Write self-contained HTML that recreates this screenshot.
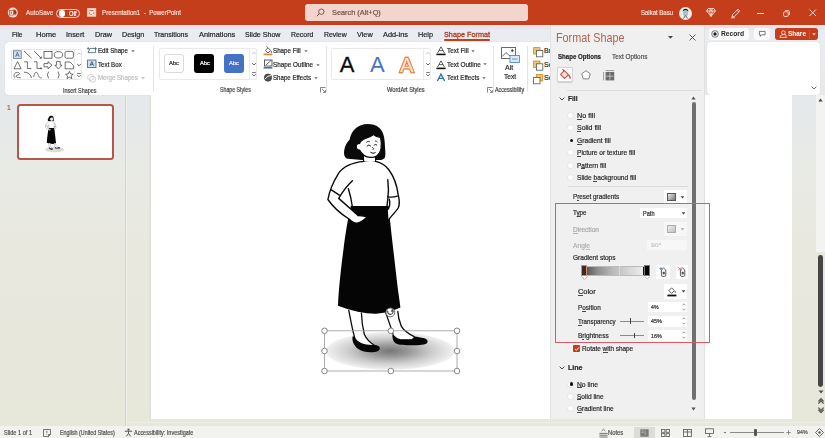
<!DOCTYPE html>
<html><head><meta charset="utf-8">
<style>
*{margin:0;padding:0;box-sizing:border-box}
html,body{width:825px;height:438px;overflow:hidden;font-family:"Liberation Sans", sans-serif;background:#E7E8E2;position:relative}
.a{position:absolute}
.t{position:absolute;white-space:pre;-webkit-text-stroke:0.2px currentColor}
svg{position:absolute;overflow:visible}
</style></head><body>
<div class="a" style="left:0;top:25px;width:825px;height:413px;background:linear-gradient(180deg,#E9ECF1 0px,#E5E9EC 75px,#E8EAE4 150px,#E8E8DE 235px,#E7E7DA 413px)"></div>
<div class="a" style="left:0;top:0;width:825px;height:25px;background:#C43E1C"></div>
<div class="a" style="left:0;top:25px;width:825px;height:5px;background:linear-gradient(180deg,#F2ECEE 0%,#EADFEA 45%,#E9ECF1 100%)"></div>
<div class="a" style="left:5px;top:42px;width:560px;height:53px;background:#FFFFFF;border-radius:4px;box-shadow:0 0 1px rgba(0,0,0,0.18)"></div>
<div class="a" style="left:707px;top:42px;width:113px;height:52.5px;background:#FFFFFF;border-radius:4px;box-shadow:0 0 1px rgba(0,0,0,0.15)"></div>
<div class="a" style="left:124.7px;top:95px;width:1px;height:331px;background:#D3D5CC"></div><div class="a" style="left:125.8px;top:95px;width:1px;height:331px;background:#F0F0EA"></div>
<div class="a" style="left:149.4px;top:95px;width:1.4px;height:324.8px;background:#E0E1DA"></div><div class="a" style="left:150.8px;top:95px;width:399.2px;height:323.8px;background:#FFFFFF"></div>
<div class="a" style="left:703px;top:95px;width:89px;height:323.8px;background:#FFFFFF"></div>
<div class="a" style="left:126px;top:421.6px;width:699px;height:1.8px;background:#EEEFE8"></div><div class="a" style="left:0;top:426.2px;width:825px;height:11.8px;background:#F2F2EE"></div>
<svg style="left:6.5px;top:7px" width="12" height="12" viewBox="0 0 12 12"><circle cx="5.8" cy="5.6" r="5" fill="#F7D9CF"/><path d="M6.4 2.2 A3.6 3.6 0 0 1 9.2 7.4 L6.4 7.4 Z" fill="#A8361A"/><rect x="2.6" y="3.4" width="4" height="4.6" fill="#FFF4F0" stroke="#B5482C" stroke-width="0.7"/><rect x="3.6" y="4.4" width="1.6" height="2.4" fill="#C9715A"/></svg>
<div class="t" style="left:26.00px;top:9.29px;font-size:7.6px;line-height:7.6px;color:#F8DDD4;font-weight:400;letter-spacing:0.000px;transform:scaleX(0.8288);transform-origin:0 0;">AutoSave</div>
<div class="a" style="left:56.1px;top:8.9px;width:23.6px;height:8.8px;border:1.2px solid #F6D3C8;border-radius:4.4px"></div>
<div class="a" style="left:58.9px;top:9.95px;width:6.6px;height:6.6px;background:#FFFFFF;border-radius:50%"></div>
<div class="t" style="left:68.50px;top:11.12px;font-size:6.4px;line-height:6.4px;color:#FFFFFF;font-weight:400;letter-spacing:0.000px;transform:scaleX(0.8905);transform-origin:0 0;">Off</div>
<svg style="left:86.7px;top:7.9px" width="9.2" height="8.8" viewBox="0 0 9.2 8.8"><rect x="0" y="0" width="9.2" height="8.8" rx="0.6" fill="#F2C8BC"/><rect x="1.4" y="1.2" width="6.4" height="6.4" fill="#F8E0D8"/><path d="M2.6 2.6 H6.6 M2.4 4.4 V6.2 M6.8 4.4 V6.2 M3.4 6.6 H5" stroke="#B9553D" stroke-width="0.8"/></svg>
<div class="t" style="left:101.50px;top:9.49px;font-size:7.6px;line-height:7.6px;color:#F8E0D8;font-weight:400;letter-spacing:0.000px;transform:scaleX(0.8162);transform-origin:0 0;">Presentation1  -  PowerPoint</div>
<div class="a" style="left:305px;top:4px;width:223px;height:17px;background:#F3D5CE;border-radius:3px"></div>
<svg style="left:316px;top:8px" width="9" height="9" viewBox="0 0 9 9"><circle cx="5.3" cy="3.7" r="2.7" fill="none" stroke="#6b4a42" stroke-width="0.9"/><line x1="3.4" y1="5.6" x2="0.8" y2="8.2" stroke="#6b4a42" stroke-width="1"/></svg>
<div class="t" style="left:331.50px;top:9.38px;font-size:7.4px;line-height:7.4px;color:#6E5149;font-weight:400;letter-spacing:0.000px;transform:scaleX(0.9940);transform-origin:0 0;">Search (Alt+Q)</div>
<div class="t" style="left:640.70px;top:9.48px;font-size:7.2px;line-height:7.2px;color:#F8E0D8;font-weight:400;letter-spacing:0.000px;transform:scaleX(0.8342);transform-origin:0 0;">Saikat Basu</div>
<svg style="left:678.5px;top:6.6px" width="13" height="13" viewBox="0 0 13 13"><circle cx="6.5" cy="6.5" r="6.5" fill="#F4EEEC"/><path d="M3.6 4.6 Q4 1.8 6.6 1.8 Q9.2 1.8 9.4 4.6 Q8 3.4 6.5 3.6 Q5 3.4 3.6 4.6Z" fill="#1d1d1d"/><ellipse cx="6.5" cy="6.2" rx="2.6" ry="2.9" fill="#A9C3C6"/><path d="M4.2 11.6 L6.5 8.6 L8.8 11.6" fill="none" stroke="#3a3a3a" stroke-width="0.8"/></svg>
<svg style="left:705.5px;top:8px" width="10" height="9" viewBox="0 0 10 9"><path d="M2 0.6 H8 L9.4 3 L5 8.4 L0.6 3 Z M0.6 3 H9.4 M3.5 0.6 L5 3 L6.5 0.6 M3.5 3 L5 8.4 L6.5 3" fill="none" stroke="#FBE3DC" stroke-width="0.9"/></svg>
<svg style="left:730px;top:7.5px" width="11" height="11" viewBox="0 0 11 11"><path d="M2 9.2 L2.6 6.6 L8 1.2 L9.8 3 L4.4 8.4 Z M7 2.2 L8.8 4" fill="none" stroke="#FBE3DC" stroke-width="0.9"/><path d="M1 10.2 Q3 9 5 10" stroke="#FBE3DC" stroke-width="0.8" fill="none"/></svg>
<div class="a" style="left:756.5px;top:12.6px;width:7.5px;height:0.9px;background:#FBE3DC"></div>
<svg style="left:782.5px;top:9.5px" width="7" height="7" viewBox="0 0 7 7"><rect x="0.6" y="1.8" width="4.6" height="4.6" rx="1" fill="none" stroke="#FBE3DC" stroke-width="0.9"/><path d="M2 0.6 H5.2 Q6.4 0.6 6.4 1.8 V5" fill="none" stroke="#FBE3DC" stroke-width="0.9"/></svg>
<svg style="left:808.5px;top:9px" width="7.5" height="7.5" viewBox="0 0 7.5 7.5"><path d="M0.5 0.5 L7 7 M7 0.5 L0.5 7" stroke="#FBE3DC" stroke-width="0.95"/></svg>
<div class="t" style="left:11.70px;top:31.48px;font-size:7.3px;line-height:7.3px;color:#262626;font-weight:400;letter-spacing:0.000px;transform:scaleX(0.8924);transform-origin:0 0;">File</div>
<div class="t" style="left:35.90px;top:31.48px;font-size:7.3px;line-height:7.3px;color:#262626;font-weight:400;letter-spacing:0.000px;transform:scaleX(1.0427);transform-origin:0 0;">Home</div>
<div class="t" style="left:66.00px;top:31.48px;font-size:7.3px;line-height:7.3px;color:#262626;font-weight:400;letter-spacing:0.000px;transform:scaleX(1.0082);transform-origin:0 0;">Insert</div>
<div class="t" style="left:94.60px;top:31.48px;font-size:7.3px;line-height:7.3px;color:#262626;font-weight:400;letter-spacing:0.000px;transform:scaleX(0.9923);transform-origin:0 0;">Draw</div>
<div class="t" style="left:121.80px;top:31.48px;font-size:7.3px;line-height:7.3px;color:#262626;font-weight:400;letter-spacing:0.000px;transform:scaleX(0.9772);transform-origin:0 0;">Design</div>
<div class="t" style="left:154.00px;top:31.48px;font-size:7.3px;line-height:7.3px;color:#262626;font-weight:400;letter-spacing:0.000px;transform:scaleX(0.9599);transform-origin:0 0;">Transitions</div>
<div class="t" style="left:198.70px;top:31.48px;font-size:7.3px;line-height:7.3px;color:#262626;font-weight:400;letter-spacing:0.000px;transform:scaleX(1.0053);transform-origin:0 0;">Animations</div>
<div class="t" style="left:245.00px;top:31.48px;font-size:7.3px;line-height:7.3px;color:#262626;font-weight:400;letter-spacing:0.000px;transform:scaleX(0.9722);transform-origin:0 0;">Slide Show</div>
<div class="t" style="left:290.70px;top:31.48px;font-size:7.3px;line-height:7.3px;color:#262626;font-weight:400;letter-spacing:0.000px;transform:scaleX(0.9477);transform-origin:0 0;">Record</div>
<div class="t" style="left:324.00px;top:31.48px;font-size:7.3px;line-height:7.3px;color:#262626;font-weight:400;letter-spacing:0.000px;transform:scaleX(0.9483);transform-origin:0 0;">Review</div>
<div class="t" style="left:357.00px;top:31.48px;font-size:7.3px;line-height:7.3px;color:#262626;font-weight:400;letter-spacing:0.000px;transform:scaleX(1.0008);transform-origin:0 0;">View</div>
<div class="t" style="left:383.00px;top:31.48px;font-size:7.3px;line-height:7.3px;color:#262626;font-weight:400;letter-spacing:0.000px;transform:scaleX(1.0101);transform-origin:0 0;">Add-ins</div>
<div class="t" style="left:418.00px;top:31.48px;font-size:7.3px;line-height:7.3px;color:#262626;font-weight:400;letter-spacing:0.000px;transform:scaleX(0.9990);transform-origin:0 0;">Help</div>
<div class="t" style="left:444.00px;top:31.43px;font-size:7.4px;line-height:7.4px;color:#B5391C;font-weight:400;letter-spacing:0.000px;-webkit-text-stroke:0.3px currentColor;transform:scaleX(0.9820);transform-origin:0 0;">Shape Format</div>
<div class="a" style="left:444px;top:39.4px;width:46px;height:1.8px;background:#C43E1C;border-radius:1px"></div>
<div class="a" style="left:709px;top:28px;width:40px;height:12px;background:#FAFAFA;border-radius:3px"></div>
<svg style="left:711px;top:29.7px" width="8" height="8" viewBox="0 0 8 8"><circle cx="4" cy="4" r="3.3" fill="none" stroke="#444" stroke-width="0.7"/><circle cx="4" cy="4" r="1.7" fill="#222"/></svg>
<div class="t" style="left:721.00px;top:30.48px;font-size:7.4px;line-height:7.4px;color:#262626;font-weight:700;letter-spacing:0.000px;-webkit-text-stroke:0;transform:scaleX(0.9031);transform-origin:0 0;">Record</div>
<div class="a" style="left:754px;top:28px;width:16px;height:12px;background:#FAFAFA;border-radius:3px"></div>
<svg style="left:758.5px;top:30.8px" width="6.5" height="6" viewBox="0 0 6.5 6"><path d="M0.4 0.4 H6.1 V3.8 H2.6 L1.3 5.4 V3.8 H0.4 Z" fill="none" stroke="#444" stroke-width="0.7"/></svg>
<div class="a" style="left:775px;top:27.8px;width:43px;height:12.2px;background:#C43E1C;border-radius:3px"></div>
<svg style="left:778.5px;top:30px" width="8" height="8" viewBox="0 0 8 8"><circle cx="4.4" cy="2.6" r="1.8" fill="none" stroke="#FBE3DC" stroke-width="0.8"/><path d="M0.8 7.4 Q1.4 4.6 4 4.6 L6.6 4.6 L7.4 7.4 Z" fill="none" stroke="#FBE3DC" stroke-width="0.8"/></svg>
<div class="t" style="left:788.00px;top:30.48px;font-size:7.4px;line-height:7.4px;color:#FFFFFF;font-weight:700;letter-spacing:0.000px;-webkit-text-stroke:0;transform:scaleX(0.8760);transform-origin:0 0;">Share</div>
<div class="a" style="left:809px;top:29.5px;width:0.6px;height:9px;background:#C9553A"></div>
<svg style="left:811.5px;top:32.8px" width="4" height="3" viewBox="0 0 4 3"><path d="M0.2 0.2 H3.8 L2 2.4 Z" fill="#F6CFC4"/></svg>
<div class="a" style="left:11px;top:48.8px;width:71px;height:31px;border:1px solid #E8E8E8;border-radius:2px"></div>
<div class="a" style="left:74px;top:49.5px;width:0.8px;height:29.5px;background:#EAEAEA"></div>
<svg style="left:11px;top:48px" width="72" height="32" viewBox="0 0 72 32">
<g fill="none" stroke="#3f3f3f" stroke-width="0.75">
<rect x="2.6" y="2.8" width="7.6" height="7.6" fill="#CFE0F1" stroke="#5a6f86"/>
<path d="M4.6 8.8 L6.4 4.2 L8.2 8.8 M5.2 7.2 H7.6" stroke="#3a5a7a" stroke-width="0.7"/>
<line x1="13" y1="3" x2="20.5" y2="10.2"/>
<line x1="23" y1="3" x2="30" y2="10"/><path d="M28.6 10.4 L30.4 10.4 L30.4 8.6" />
<rect x="33" y="3.4" width="8" height="6.8"/>
<ellipse cx="47.4" cy="6.8" rx="4.2" ry="3.2"/>
<rect x="54" y="3.4" width="8.4" height="6.8" rx="1.5"/>
<path d="M3 20.8 L6.6 13.6 L10.2 20.8 Z"/>
<path d="M13.2 13.8 H16.4 V20.6 H20.4"/>
<path d="M23 13.8 H26 V20.4 H29.6"/><circle cx="30" cy="20.4" r="0.6" fill="#3f3f3f"/>
<path d="M33 15.6 H37 V13.6 L41 17.2 L37 20.8 V18.8 H33 Z"/>
<path d="M45.6 13.4 H49.2 V17.2 H51 L47.4 21 L43.8 17.2 H45.6 Z"/>
<path d="M54.2 14 H59 L62.4 17.4 V20.8 H54.2 Z"/>
<path d="M4 29.8 C2 28 3 24.4 6.6 24.4 C9 24.4 9 27 6.8 27 C4.6 27 4.6 29.6 7.4 29.6 L9.8 29.8"/>
<path d="M13 24.2 Q19 24 20.6 30"/>
<path d="M22.6 29 C24 23 26 23.4 27 26.4 C28 29.6 29.6 30.4 30.8 29.6"/>
<path d="M37.6 23.6 Q35.2 26.8 37.6 30.4"/>
<path d="M47 23.6 Q49.4 26.8 47 30.4"/>
<path d="M58.4 23.4 L59.6 26 L62.2 26.2 L60.2 28 L60.8 30.6 L58.4 29.2 L56 30.6 L56.6 28 L54.6 26.2 L57.2 26 Z"/>
</g>
<g fill="#555">
<path d="M66.2 6.4 L68 4.8 L69.8 6.4" stroke="#999" stroke-width="0.6" fill="none"/>
<path d="M66.2 16 L68 17.8 L69.8 16" stroke="#333" stroke-width="0.8" fill="none"/>
<path d="M66.2 25.4 H69.8 M66.2 27 L68 28.8 L69.8 27" stroke="#333" stroke-width="0.7" fill="none"/>
</g></svg>
<svg style="left:87px;top:47px" width="10" height="36" viewBox="0 0 10 36"><g fill="none" stroke="#3f5f7f" stroke-width="0.8"><path d="M1 5.6 L3 1.4 H8.6 V5.6 M1 5.6 H8.6"/><circle cx="1.2" cy="1.4" r="0.7" fill="#3f5f7f"/><circle cx="8.6" cy="1.4" r="0.7" fill="#3f5f7f"/><rect x="0.6" y="13" width="8.4" height="7.6" fill="#CFE0F1"/><path d="M3 18.8 L4.8 14.6 L6.6 18.8 M3.6 17.4 H6" stroke="#2a4a6a"/><circle cx="3.6" cy="30.4" r="3" stroke="#c8c8c8"/><circle cx="5.6" cy="32.2" r="3" stroke="#c8c8c8"/></g></svg>
<div class="t" style="left:98.20px;top:47.33px;font-size:7px;line-height:7px;color:#262626;font-weight:400;letter-spacing:0.000px;transform:scaleX(0.8701);transform-origin:0 0;">Edit Shape</div>
<svg style="left:131px;top:49.8px" width="4" height="3" viewBox="0 0 4 3"><path d="M0.3 0.3 H3.7 L2 2.2Z" fill="#666"/></svg>
<div class="t" style="left:98.20px;top:61.28px;font-size:7px;line-height:7px;color:#262626;font-weight:400;letter-spacing:0.000px;transform:scaleX(0.8861);transform-origin:0 0;">Text Box</div>
<div class="t" style="left:98.20px;top:74.48px;font-size:7px;line-height:7px;color:#BDBDBD;font-weight:400;letter-spacing:0.000px;transform:scaleX(0.8741);transform-origin:0 0;">Merge Shapes</div>
<svg style="left:141px;top:77px" width="4" height="3" viewBox="0 0 4 3"><path d="M0 0 H4 L2 2.4Z" fill="#c8c8c8"/></svg>
<div class="t" style="left:63.00px;top:87.76px;font-size:6.3px;line-height:6.3px;color:#444444;font-weight:400;letter-spacing:0.000px;transform:scaleX(0.8621);transform-origin:0 0;">Insert Shapes</div>
<div class="a" style="left:153px;top:46px;width:0.8px;height:46px;background:#E4E4E4"></div>
<div class="a" style="left:159.3px;top:48.2px;width:98px;height:32px;border:1px solid #EAEAEA;border-radius:2px"></div>
<div class="a" style="left:163.6px;top:53.7px;width:20.4px;height:19.7px;background:#fff;border:1.5px solid #D8DCD4;border-radius:3px"></div>
<div class="a" style="left:194.2px;top:53.7px;width:20px;height:19.7px;background:#000;border-radius:3px"></div>
<div class="a" style="left:224px;top:53.7px;width:20px;height:19.7px;background:#4472C4;border-radius:3px"></div>
<div class="t" style="left:169.00px;top:61.25px;font-size:5.6px;line-height:5.6px;color:#333;font-weight:400;letter-spacing:0.000px;transform:scaleX(1.0373);transform-origin:0 0;">Abc</div>
<div class="t" style="left:199.50px;top:61.25px;font-size:5.6px;line-height:5.6px;color:#fff;font-weight:400;letter-spacing:0.000px;transform:scaleX(1.0373);transform-origin:0 0;">Abc</div>
<div class="t" style="left:229.30px;top:61.25px;font-size:5.6px;line-height:5.6px;color:#f4f4f4;font-weight:400;letter-spacing:0.000px;transform:scaleX(1.0373);transform-origin:0 0;">Abc</div>
<div class="a" style="left:249.2px;top:49px;width:0.8px;height:30.5px;background:#EAEAEA"></div>
<svg style="left:250px;top:49px" width="8" height="31" viewBox="0 0 8 31"><path d="M2.2 5 L4 3.4 L5.8 5" stroke="#999" stroke-width="0.6" fill="none"/><path d="M2.2 14.2 L4 16 L5.8 14.2" stroke="#333" stroke-width="0.8" fill="none"/><path d="M2.2 23.6 H5.8 M2.2 25.2 L4 27 L5.8 25.2" stroke="#333" stroke-width="0.7" fill="none"/></svg>
<svg style="left:262.5px;top:46px" width="10" height="36" viewBox="0 0 10 36"><g fill="none" stroke="#333" stroke-width="0.8">
<path d="M2.4 4.4 L5 1.8 L7.6 4.4 L5 7 Z"/><path d="M5 1.8 L3.6 0.4"/><path d="M8 5 Q9 6.4 8.4 7"/>
<rect x="0.6" y="7.6" width="8.8" height="1.6" fill="#ED7D31" stroke="none"/>
<rect x="1.4" y="14" width="7.6" height="6" stroke="#333"/><path d="M3 19 L7.8 14.6" stroke="#333"/>
<rect x="0.6" y="21" width="8.8" height="1.6" fill="#4472C4" stroke="none"/>
<circle cx="5" cy="31.6" r="3.6" fill="#555" stroke="#333"/><path d="M2 33 Q5 29 8 29.6" stroke="#fff" stroke-width="0.9"/>
</g></svg>
<div class="t" style="left:273.30px;top:47.28px;font-size:7px;line-height:7px;color:#262626;font-weight:400;letter-spacing:0.000px;transform:scaleX(0.8895);transform-origin:0 0;">Shape Fill</div>
<div class="t" style="left:273.30px;top:61.38px;font-size:7px;line-height:7px;color:#262626;font-weight:400;letter-spacing:0.000px;transform:scaleX(0.9037);transform-origin:0 0;">Shape Outline</div>
<div class="t" style="left:273.30px;top:74.48px;font-size:7px;line-height:7px;color:#262626;font-weight:400;letter-spacing:0.000px;transform:scaleX(0.8742);transform-origin:0 0;">Shape Effects</div>
<svg style="left:303.5px;top:49.8px" width="4" height="3" viewBox="0 0 4 3"><path d="M0.3 0.3 H3.7 L2 2.2Z" fill="#666"/></svg>
<svg style="left:315.8px;top:63.6px" width="4" height="3" viewBox="0 0 4 3"><path d="M0.3 0.3 H3.7 L2 2.2Z" fill="#666"/></svg>
<svg style="left:314px;top:77.4px" width="4" height="3" viewBox="0 0 4 3"><path d="M0.3 0.3 H3.7 L2 2.2Z" fill="#666"/></svg>
<div class="t" style="left:219.70px;top:87.36px;font-size:6.3px;line-height:6.3px;color:#444444;font-weight:400;letter-spacing:0.000px;transform:scaleX(0.8327);transform-origin:0 0;">Shape Styles</div>
<svg style="left:319.8px;top:86.8px" width="6" height="6" viewBox="0 0 6 6"><path d="M0.5 5.5 V0.5 H5.5 M2 2 L5.4 5.4 M3 5.4 H5.4 V3" fill="none" stroke="#555" stroke-width="0.7"/></svg>
<div class="a" style="left:326.3px;top:46px;width:0.8px;height:46px;background:#E4E4E4"></div>
<div class="a" style="left:331.2px;top:48.2px;width:100px;height:32px;border:1px solid #EAEAEA;border-radius:2px"></div>
<div class="t" style="left:339.80px;top:54.40px;font-size:22px;line-height:22px;color:#0A0A0A;font-weight:400;letter-spacing:0.000px;-webkit-text-stroke:0.3px #0A0A0A;">A</div>
<div class="t" style="left:370.00px;top:54.40px;font-size:22px;line-height:22px;color:#4472C4;font-weight:400;letter-spacing:0.000px;-webkit-text-stroke:0;">A</div>
<svg style="left:396px;top:52px" width="24" height="24" viewBox="0 0 24 24"><text x="4.2" y="20.1" font-family="Liberation Sans" font-size="21" fill="#FDE6D6" stroke="#EE8547" stroke-width="2.3" paint-order="stroke fill" transform="scale(0.96,1)" style="filter:drop-shadow(0 0 0.6px #F6B48A)">A</text></svg>
<div class="a" style="left:423.3px;top:49px;width:0.8px;height:30.5px;background:#EAEAEA"></div>
<svg style="left:423.5px;top:49px" width="8" height="31" viewBox="0 0 8 31"><path d="M2.2 5 L4 3.4 L5.8 5" stroke="#999" stroke-width="0.6" fill="none"/><path d="M2.2 14.2 L4 16 L5.8 14.2" stroke="#333" stroke-width="0.8" fill="none"/><path d="M2.2 23.6 H5.8 M2.2 25.2 L4 27 L5.8 25.2" stroke="#333" stroke-width="0.7" fill="none"/></svg>
<svg style="left:435.5px;top:46px" width="10" height="36" viewBox="0 0 10 36"><g fill="none" stroke="#333" stroke-width="0.8">
<path d="M1.6 7 L5 0.8 L8.4 7 M3 4.6 H7"/><rect x="0.4" y="7.6" width="9.2" height="1.6" fill="#111" stroke="none"/>
<path d="M1.6 21 L5 14.8 L8.4 21 M3 18.6 H7"/><rect x="0.4" y="21.6" width="9.2" height="1.6" fill="#111" stroke="none"/>
<path d="M1.4 35 L5 28 L8.6 35 M2.8 32.4 H7.2" stroke="#2E75B6" stroke-width="1.4"/>
</g></svg>
<div class="t" style="left:446.70px;top:47.43px;font-size:7px;line-height:7px;color:#262626;font-weight:400;letter-spacing:0.000px;transform:scaleX(0.9101);transform-origin:0 0;">Text Fill</div>
<div class="t" style="left:446.70px;top:61.38px;font-size:7px;line-height:7px;color:#262626;font-weight:400;letter-spacing:0.000px;transform:scaleX(0.9170);transform-origin:0 0;">Text Outline</div>
<div class="t" style="left:446.70px;top:74.48px;font-size:7px;line-height:7px;color:#262626;font-weight:400;letter-spacing:0.000px;transform:scaleX(0.8957);transform-origin:0 0;">Text Effects</div>
<svg style="left:470.5px;top:49.6px" width="4" height="3" viewBox="0 0 4 3"><path d="M0.3 0.3 H3.7 L2 2.2Z" fill="#666"/></svg>
<svg style="left:482.5px;top:63.4px" width="4" height="3" viewBox="0 0 4 3"><path d="M0.3 0.3 H3.7 L2 2.2Z" fill="#666"/></svg>
<svg style="left:481.5px;top:77.1px" width="4" height="3" viewBox="0 0 4 3"><path d="M0.3 0.3 H3.7 L2 2.2Z" fill="#666"/></svg>
<div class="t" style="left:386.70px;top:87.36px;font-size:6.3px;line-height:6.3px;color:#444444;font-weight:400;letter-spacing:0.000px;transform:scaleX(0.8979);transform-origin:0 0;">WordArt Styles</div>
<svg style="left:486.8px;top:87px" width="6" height="6" viewBox="0 0 6 6"><path d="M0.5 5.5 V0.5 H5.5 M2 2 L5.4 5.4 M3 5.4 H5.4 V3" fill="none" stroke="#555" stroke-width="0.7"/></svg>
<div class="a" style="left:492.8px;top:46px;width:0.8px;height:46px;background:#E4E4E4"></div>
<svg style="left:501px;top:47px" width="19" height="16" viewBox="0 0 19 16"><g fill="none" stroke="#444" stroke-width="0.8">
<rect x="0.6" y="0.6" width="14" height="11"/><path d="M1 9.6 L5 5.6 L9 9"/><circle cx="11.4" cy="3.6" r="0.9" fill="#444"/>
<rect x="9" y="8.4" width="9.4" height="7" fill="#DCEBF7" stroke="#3A7FC0"/><path d="M11 12 H16.4" stroke="#3A7FC0"/>
</g></svg>
<div class="t" style="left:505.40px;top:64.38px;font-size:7.4px;line-height:7.4px;color:#262626;font-weight:400;letter-spacing:0.000px;transform:scaleX(0.9507);transform-origin:0 0;">Alt</div>
<div class="t" style="left:503.80px;top:73.48px;font-size:7.4px;line-height:7.4px;color:#262626;font-weight:400;letter-spacing:0.000px;transform:scaleX(0.8995);transform-origin:0 0;">Text</div>
<div class="t" style="left:495.30px;top:87.31px;font-size:6.3px;line-height:6.3px;color:#444444;font-weight:400;letter-spacing:0.000px;transform:scaleX(0.8485);transform-origin:0 0;">Accessibility</div>
<div class="a" style="left:527.2px;top:46px;width:0.8px;height:46px;background:#E4E4E4"></div>
<svg style="left:532.5px;top:46.5px" width="12" height="38" viewBox="0 0 12 38"><g stroke-width="0.8">
<rect x="0.6" y="0.6" width="6.4" height="6.4" fill="#F5C26B" stroke="#C9892A"/><rect x="3.4" y="3.4" width="6.4" height="6.4" fill="#fff" stroke="#555"/>
<rect x="0.6" y="14" width="6.4" height="6.4" fill="#F5C26B" stroke="#C9892A"/><rect x="3.4" y="16.8" width="6.4" height="6.4" fill="#fff" stroke="#555"/>
<rect x="3.4" y="27.6" width="6.4" height="6.4" fill="#F5C26B" stroke="#C9892A"/><rect x="0.6" y="30.4" width="6.4" height="6.4" fill="#fff" stroke="#555"/>
</g></svg>
<div class="t" style="left:544.00px;top:47.28px;font-size:7px;line-height:7px;color:#262626;font-weight:400;letter-spacing:0.000px;">Br</div>
<div class="t" style="left:544.00px;top:61.48px;font-size:7px;line-height:7px;color:#262626;font-weight:400;letter-spacing:0.000px;">Se</div>
<div class="t" style="left:544.00px;top:74.33px;font-size:7px;line-height:7px;color:#262626;font-weight:400;letter-spacing:0.000px;">Se</div>
<svg style="left:811px;top:86px" width="6" height="4" viewBox="0 0 6 4"><path d="M0.6 0.6 L3 3 L5.4 0.6" fill="none" stroke="#444" stroke-width="0.8"/></svg>
<div class="a" style="left:550px;top:25px;width:154.5px;height:394px;background:#F0F0F0;border-left:1px solid #E2E2E2;border-right:1px solid #E0E0E0"></div>
<div class="a" style="left:688.6px;top:95px;width:10px;height:320px;background:#F1F1F1"></div>
<div class="t" style="left:556.30px;top:32.27px;font-size:12.2px;line-height:12.2px;color:#B3614F;font-weight:400;letter-spacing:0.000px;-webkit-text-stroke:0;transform:scaleX(0.8856);transform-origin:0 0;">Format Shape</div>
<svg style="left:668px;top:36px" width="5" height="3" viewBox="0 0 5 3"><path d="M0 0 H5 L2.5 2.8Z" fill="#444"/></svg>
<svg style="left:689px;top:34px" width="7" height="7" viewBox="0 0 7 7"><path d="M0.5 0.5 L6.5 6.5 M6.5 0.5 L0.5 6.5" stroke="#444" stroke-width="0.9"/></svg>
<div class="t" style="left:558.30px;top:53.48px;font-size:7px;line-height:7px;color:#262626;font-weight:700;letter-spacing:0.000px;transform:scaleX(0.8703);transform-origin:0 0;">Shape Options</div>
<div class="t" style="left:611.60px;top:53.43px;font-size:7px;line-height:7px;color:#505050;font-weight:400;letter-spacing:0.000px;transform:scaleX(0.9095);transform-origin:0 0;">Text Options</div>
<div class="a" style="left:556.7px;top:66.6px;width:16.6px;height:15.4px;background:#FFFFFF;border:1px solid #D5D5D5;border-radius:2px;box-shadow:0 0.5px 1px rgba(0,0,0,0.15)"></div>
<svg style="left:558.5px;top:67.6px" width="13" height="13" viewBox="0 0 13 13"><g fill="none" stroke="#C9483C" stroke-width="1.1" stroke-linejoin="round">
<path d="M1.6 6.4 L5.4 2.6 L9.4 6.6 L5.6 10.4 Z" fill="#FBE9E6"/><path d="M5 3 L3.6 1"/><path d="M9.6 7 Q11.8 9 10.8 10.8" stroke-width="1.3"/></g></svg>
<svg style="left:581px;top:69.6px" width="10" height="10" viewBox="0 0 10 10"><path d="M5 0.7 L9.3 3.8 L7.7 8.9 H2.3 L0.7 3.8 Z" fill="#fff" stroke="#666" stroke-width="0.8"/></svg>
<svg style="left:602.5px;top:69.5px" width="12" height="11" viewBox="0 0 12 11"><g>
<rect x="2.6" y="2" width="8.6" height="8.4" fill="#6A6A6A"/><path d="M6.9 2.6 V9.8 M3.2 6.2 H10.6" stroke="#ddd" stroke-width="0.7"/>
<path d="M0.6 2 V10.4 M2.6 0.6 H11.2" stroke="#777" stroke-width="0.7"/></g></svg>
<div class="a" style="left:567px;top:90px;width:135px;height:0.8px;background:#DCDCDC"></div>
<svg style="left:558.5px;top:97px" width="6" height="4" viewBox="0 0 6 4"><path d="M0.6 0.6 L3 3 L5.4 0.6" fill="none" stroke="#333" stroke-width="0.9"/></svg>
<div class="t" style="left:568.00px;top:95.43px;font-size:7px;line-height:7px;color:#262626;font-weight:700;letter-spacing:0.000px;transform:scaleX(0.9383);transform-origin:0 0;">Fill</div>
<div class="a" style="left:567.4px;top:112.00px;width:7px;height:7px;border-radius:50%;background:#FFFFFF;border:0.5px solid #E4E4E4"></div>
<div class="a" style="left:576.70px;top:118.88px;width:5.21px;height:0.8px;background:#2A2A2A;opacity:0.85"></div>
<div class="t" style="left:576.70px;top:112.92px;font-size:6.8px;line-height:6.8px;color:#2A2A2A;font-weight:400;letter-spacing:0.000px;transform:scaleX(1.0588);transform-origin:0 0;">No fill</div>
<div class="a" style="left:567.4px;top:124.40px;width:7px;height:7px;border-radius:50%;background:#FFFFFF;border:0.5px solid #E4E4E4"></div>
<div class="a" style="left:576.70px;top:131.28px;width:4.66px;height:0.8px;background:#2A2A2A;opacity:0.85"></div>
<div class="t" style="left:576.70px;top:125.32px;font-size:6.8px;line-height:6.8px;color:#2A2A2A;font-weight:400;letter-spacing:0.000px;transform:scaleX(1.0247);transform-origin:0 0;">Solid fill</div>
<div class="a" style="left:567.4px;top:136.80px;width:7px;height:7px;border-radius:50%;background:#FFFFFF;border:0.5px solid #E4E4E4"></div>
<div class="a" style="left:569.5px;top:138.60px;width:3.2px;height:3.2px;border-radius:50%;background:#111"></div>
<div class="a" style="left:576.70px;top:143.68px;width:5.21px;height:0.8px;background:#2A2A2A;opacity:0.85"></div>
<div class="t" style="left:576.70px;top:137.72px;font-size:6.8px;line-height:6.8px;color:#2A2A2A;font-weight:400;letter-spacing:0.000px;transform:scaleX(0.9828);transform-origin:0 0;">Gradient fill</div>
<div class="a" style="left:567.4px;top:149.20px;width:7px;height:7px;border-radius:50%;background:#FFFFFF;border:0.5px solid #E4E4E4"></div>
<div class="a" style="left:576.70px;top:156.08px;width:4.41px;height:0.8px;background:#2A2A2A;opacity:0.85"></div>
<div class="t" style="left:576.70px;top:150.12px;font-size:6.8px;line-height:6.8px;color:#2A2A2A;font-weight:400;letter-spacing:0.000px;transform:scaleX(0.9690);transform-origin:0 0;">Picture or texture fill</div>
<div class="a" style="left:567.4px;top:161.60px;width:7px;height:7px;border-radius:50%;background:#FFFFFF;border:0.5px solid #E4E4E4"></div>
<div class="a" style="left:581.08px;top:168.48px;width:3.64px;height:0.8px;background:#2A2A2A;opacity:0.85"></div>
<div class="t" style="left:576.70px;top:162.52px;font-size:6.8px;line-height:6.8px;color:#2A2A2A;font-weight:400;letter-spacing:0.000px;transform:scaleX(0.9625);transform-origin:0 0;">Pattern fill</div>
<div class="a" style="left:567.4px;top:174.00px;width:7px;height:7px;border-radius:50%;background:#FFFFFF;border:0.5px solid #E4E4E4"></div>
<div class="a" style="left:593.28px;top:180.88px;width:3.69px;height:0.8px;background:#2A2A2A;opacity:0.85"></div>
<div class="t" style="left:576.70px;top:174.92px;font-size:6.8px;line-height:6.8px;color:#2A2A2A;font-weight:400;letter-spacing:0.000px;transform:scaleX(0.9746);transform-origin:0 0;">Slide background fill</div>
<div class="a" style="left:568px;top:185.6px;width:120px;height:0.8px;background:#DCDCDC"></div>
<div class="a" style="left:577.04px;top:200.08px;width:2.10px;height:0.8px;background:#2A2A2A;opacity:0.85"></div>
<div class="t" style="left:572.80px;top:194.12px;font-size:6.8px;line-height:6.8px;color:#2A2A2A;font-weight:400;letter-spacing:0.000px;transform:scaleX(0.9333);transform-origin:0 0;">Preset gradients</div>
<div class="a" style="left:664px;top:189.5px;width:22.5px;height:14px;background:#FFFFFF;opacity:1"></div>
<div class="a" style="left:667.2px;top:192.5px;width:8.4px;height:8.4px;background:linear-gradient(135deg,#e8e8e8,#7a7a7a);border:0.7px solid #555;opacity:1"></div>
<svg style="left:680px;top:195.5px;opacity:1" width="5" height="3" viewBox="0 0 5 3"><path d="M0.6 0.3 H4.4 L2.5 2.5Z" fill="#444"/></svg>
<div class="a" style="left:576.83px;top:216.28px;width:2.79px;height:0.8px;background:#2A2A2A;opacity:0.85"></div>
<div class="t" style="left:573.00px;top:210.32px;font-size:6.8px;line-height:6.8px;color:#2A2A2A;font-weight:400;letter-spacing:0.000px;transform:scaleX(0.9220);transform-origin:0 0;">Type</div>
<div class="a" style="left:640px;top:207.8px;width:46.6px;height:10.4px;background:#FFFFFF"></div>
<div class="t" style="left:642.50px;top:210.62px;font-size:6.6px;line-height:6.6px;color:#2A2A2A;font-weight:400;letter-spacing:0.000px;transform:scaleX(0.8470);transform-origin:0 0;">Path</div>
<svg style="left:681px;top:212px" width="5" height="3" viewBox="0 0 5 3"><path d="M0.6 0.3 H4.4 L2.5 2.5Z" fill="#444"/></svg>
<div class="a" style="left:573.00px;top:233.18px;width:4.77px;height:0.8px;background:#A8A8A8;opacity:0.85"></div>
<div class="t" style="left:573.00px;top:227.22px;font-size:6.8px;line-height:6.8px;color:#A8A8A8;font-weight:400;letter-spacing:0.000px;transform:scaleX(0.9691);transform-origin:0 0;">Direction</div>
<div class="a" style="left:664px;top:222px;width:22.5px;height:14px;background:#FFFFFF;opacity:0.45"></div>
<div class="a" style="left:667.2px;top:225px;width:8.4px;height:8.4px;background:linear-gradient(135deg,#e8e8e8,#7a7a7a);border:0.7px solid #555;opacity:0.45"></div>
<svg style="left:680px;top:228px;opacity:0.45" width="5" height="3" viewBox="0 0 5 3"><path d="M0.6 0.3 H4.4 L2.5 2.5Z" fill="#444"/></svg>
<div class="a" style="left:586.30px;top:248.88px;width:3.70px;height:0.8px;background:#B0B0B0;opacity:0.85"></div>
<div class="t" style="left:573.00px;top:242.92px;font-size:6.8px;line-height:6.8px;color:#B0B0B0;font-weight:400;letter-spacing:0.000px;transform:scaleX(0.9775);transform-origin:0 0;">Angle</div>
<div class="a" style="left:646.5px;top:239.5px;width:40.5px;height:10.5px;background:#F7F7F7"></div>
<div class="t" style="left:650.50px;top:242.46px;font-size:6px;line-height:6px;color:#C8C8C8;font-weight:400;letter-spacing:0.000px;transform:scaleX(1.1566);transform-origin:0 0;">90°</div>
<div class="t" style="left:573.00px;top:255.42px;font-size:6.8px;line-height:6.8px;color:#2A2A2A;font-weight:400;letter-spacing:0.000px;transform:scaleX(0.9615);transform-origin:0 0;">Gradient stops</div>
<div class="a" style="left:581.5px;top:265.5px;width:68.5px;height:10.5px;background:linear-gradient(90deg,#454545 0%,#8E8E8E 22%,#BABABA 45%,#D4D4D4 68%,#EDEDED 91%,#111 91.5%);border:0.6px solid #BBB"></div>
<div class="a" style="left:619px;top:265.8px;width:0.7px;height:10px;background:#d8d8d8"></div>
<div class="a" style="left:581px;top:265px;width:6px;height:11.2px;background:#3a2a22;border:1px solid #C8906F"></div>
<svg style="left:581px;top:275.6px" width="7" height="4" viewBox="0 0 7 4"><path d="M0.5 0.4 L3.5 3.4 L6.5 0.4" fill="#fff" stroke="#C8906F" stroke-width="0.8"/></svg>
<div class="a" style="left:643.6px;top:265.4px;width:6.2px;height:10.8px;background:#000;border:0.6px solid #777"></div>
<svg style="left:643.6px;top:275.6px" width="7" height="4" viewBox="0 0 7 4"><path d="M0.5 0.4 L3.1 3 L5.7 0.4" fill="#fff" stroke="#999" stroke-width="0.6"/></svg>
<div class="a" style="left:656px;top:265px;width:13.5px;height:14px;background:#FFFFFF"></div>
<svg style="left:658.5px;top:267px" width="9" height="10" viewBox="0 0 9 10"><path d="M2.4 3 V8.2 Q2.4 9.4 4 9.4 H5.4 Q6.8 9.4 6.8 8.2 V3 L4.6 1 Z" fill="none" stroke="#333" stroke-width="0.8"/><path d="M0.4 1.6 H3.4 M1.9 0.2 V3" stroke="#2E75B6" stroke-width="0.8"/><rect x="3.6" y="4.8" width="2.2" height="2.6" fill="#555"/></svg>
<div class="a" style="left:675.5px;top:265px;width:12px;height:14px;background:#FFFFFF"></div>
<svg style="left:677.5px;top:267px" width="9" height="10" viewBox="0 0 9 10"><path d="M2.4 3 V8.2 Q2.4 9.4 4 9.4 H5.4 Q6.8 9.4 6.8 8.2 V3 L4.6 1 Z" fill="none" stroke="#333" stroke-width="0.8"/><path d="M0.4 0.4 L3.2 3.2 M3.2 0.4 L0.4 3.2" stroke="#D0463A" stroke-width="0.8"/><rect x="3.6" y="4.8" width="2.2" height="2.6" fill="#555"/></svg>
<div class="a" style="left:577.80px;top:295.18px;width:5.36px;height:0.8px;background:#2A2A2A;opacity:0.85"></div>
<div class="t" style="left:577.80px;top:289.22px;font-size:6.8px;line-height:6.8px;color:#2A2A2A;font-weight:400;letter-spacing:0.000px;transform:scaleX(1.0892);transform-origin:0 0;">Color</div>
<div class="a" style="left:664px;top:284px;width:23px;height:15px;background:#FFFFFF"></div>
<svg style="left:667px;top:286px" width="10" height="11" viewBox="0 0 10 11"><path d="M1.8 4.6 L4.6 1.8 L7.4 4.6 L4.6 7.4 Z" fill="none" stroke="#333" stroke-width="0.8"/><path d="M7.8 5 Q9 6.4 8.4 7" stroke="#333" stroke-width="0.7" fill="none"/><rect x="0.4" y="8.6" width="9" height="1.8" fill="#111"/></svg>
<svg style="left:680.5px;top:290.2px" width="5" height="3" viewBox="0 0 5 3"><path d="M0.6 0.3 H4.4 L2.5 2.5Z" fill="#444"/></svg>
<div class="a" style="left:582.07px;top:310.88px;width:3.55px;height:0.8px;background:#2A2A2A;opacity:0.85"></div>
<div class="t" style="left:577.80px;top:304.92px;font-size:6.8px;line-height:6.8px;color:#2A2A2A;font-weight:400;letter-spacing:0.000px;transform:scaleX(0.9385);transform-origin:0 0;">Position</div>
<div class="a" style="left:647.6px;top:301.8px;width:39.4px;height:10.6px;background:#FFFFFF"></div>
<div class="t" style="left:651.00px;top:304.26px;font-size:6.0px;line-height:6.0px;color:#2A2A2A;font-weight:400;letter-spacing:0.000px;transform:scaleX(0.8649);transform-origin:0 0;">4%</div>
<svg style="left:681.5px;top:303.0px" width="4" height="8" viewBox="0 0 4 8"><path d="M0.6 2.2 L2 0.8 L3.4 2.2 M0.6 5.8 L2 7.2 L3.4 5.8" fill="none" stroke="#555" stroke-width="0.6"/></svg>
<div class="a" style="left:577.80px;top:325.28px;width:3.79px;height:0.8px;background:#2A2A2A;opacity:0.85"></div>
<div class="t" style="left:577.80px;top:319.32px;font-size:6.8px;line-height:6.8px;color:#2A2A2A;font-weight:400;letter-spacing:0.000px;transform:scaleX(0.9126);transform-origin:0 0;">Transparency</div>
<div class="a" style="left:647.6px;top:316px;width:39.4px;height:10.6px;background:#FFFFFF"></div>
<div class="t" style="left:651.00px;top:318.46px;font-size:6.0px;line-height:6.0px;color:#2A2A2A;font-weight:400;letter-spacing:0.000px;transform:scaleX(0.8905);transform-origin:0 0;">45%</div>
<svg style="left:681.5px;top:317.2px" width="4" height="8" viewBox="0 0 4 8"><path d="M0.6 2.2 L2 0.8 L3.4 2.2 M0.6 5.8 L2 7.2 L3.4 5.8" fill="none" stroke="#555" stroke-width="0.6"/></svg>
<div class="a" style="left:582.15px;top:338.88px;width:2.15px;height:0.8px;background:#2A2A2A;opacity:0.85"></div>
<div class="t" style="left:577.80px;top:332.92px;font-size:6.8px;line-height:6.8px;color:#2A2A2A;font-weight:400;letter-spacing:0.000px;transform:scaleX(0.9556);transform-origin:0 0;">Brightness</div>
<div class="a" style="left:647.6px;top:330.2px;width:39.4px;height:10.6px;background:#FFFFFF"></div>
<div class="t" style="left:651.00px;top:333.41px;font-size:6.0px;line-height:6.0px;color:#2A2A2A;font-weight:400;letter-spacing:0.000px;transform:scaleX(0.8905);transform-origin:0 0;">16%</div>
<svg style="left:681.5px;top:331.4px" width="4" height="8" viewBox="0 0 4 8"><path d="M0.6 2.2 L2 0.8 L3.4 2.2 M0.6 5.8 L2 7.2 L3.4 5.8" fill="none" stroke="#555" stroke-width="0.6"/></svg>
<div class="a" style="left:620px;top:320.9px;width:24px;height:0.7px;background:#8A8A8A"></div>
<div class="a" style="left:630px;top:318.4px;width:1.2px;height:5.6px;background:#444"></div>
<div class="a" style="left:620px;top:335.1px;width:24px;height:0.7px;background:#8A8A8A"></div>
<div class="a" style="left:633.6px;top:332.6px;width:1.2px;height:5.6px;background:#444"></div>
<div class="a" style="left:572.8px;top:345.2px;width:7px;height:7px;background:#C43E1C;border-radius:1px"></div>
<svg style="left:573.5px;top:346px" width="6" height="6" viewBox="0 0 6 6"><path d="M1 3 L2.4 4.4 L5 1.4" fill="none" stroke="#fff" stroke-width="0.9"/></svg>
<div class="a" style="left:602.98px;top:352.28px;width:4.61px;height:0.8px;background:#2A2A2A;opacity:0.85"></div>
<div class="t" style="left:582.40px;top:346.32px;font-size:6.8px;line-height:6.8px;color:#2A2A2A;font-weight:400;letter-spacing:0.000px;transform:scaleX(0.9390);transform-origin:0 0;">Rotate with shape</div>
<svg style="left:558.5px;top:365.6px" width="6" height="4" viewBox="0 0 6 4"><path d="M0.6 0.6 L3 3 L5.4 0.6" fill="none" stroke="#333" stroke-width="0.9"/></svg>
<div class="t" style="left:568.00px;top:364.33px;font-size:7px;line-height:7px;color:#262626;font-weight:700;letter-spacing:0.000px;transform:scaleX(1.0076);transform-origin:0 0;">Line</div>
<div class="a" style="left:567.4px;top:380.60px;width:7px;height:7px;border-radius:50%;background:#FFFFFF;border:0.5px solid #E4E4E4"></div>
<div class="a" style="left:569.5px;top:382.40px;width:3.2px;height:3.2px;border-radius:50%;background:#111"></div>
<div class="a" style="left:576.70px;top:387.48px;width:4.88px;height:0.8px;background:#2A2A2A;opacity:0.85"></div>
<div class="t" style="left:576.70px;top:381.52px;font-size:6.8px;line-height:6.8px;color:#2A2A2A;font-weight:400;letter-spacing:0.000px;transform:scaleX(0.9919);transform-origin:0 0;">No line</div>
<div class="a" style="left:567.4px;top:392.60px;width:7px;height:7px;border-radius:50%;background:#FFFFFF;border:0.5px solid #E4E4E4"></div>
<div class="a" style="left:576.70px;top:399.48px;width:4.38px;height:0.8px;background:#2A2A2A;opacity:0.85"></div>
<div class="t" style="left:576.70px;top:393.52px;font-size:6.8px;line-height:6.8px;color:#2A2A2A;font-weight:400;letter-spacing:0.000px;transform:scaleX(0.9640);transform-origin:0 0;">Solid line</div>
<div class="a" style="left:567.4px;top:405.00px;width:7px;height:7px;border-radius:50%;background:#FFFFFF;border:0.5px solid #E4E4E4"></div>
<div class="a" style="left:576.70px;top:411.88px;width:5.03px;height:0.8px;background:#2A2A2A;opacity:0.85"></div>
<div class="t" style="left:576.70px;top:405.92px;font-size:6.8px;line-height:6.8px;color:#2A2A2A;font-weight:400;letter-spacing:0.000px;transform:scaleX(0.9495);transform-origin:0 0;">Gradient line</div>
<svg style="left:691px;top:96px" width="5" height="4" viewBox="0 0 5 4"><path d="M0.3 3.6 L2.5 0.6 L4.7 3.6Z" fill="#555"/></svg>
<div class="a" style="left:691.5px;top:102.4px;width:4.4px;height:298px;background:#707070;border-radius:2.2px"></div>
<svg style="left:691px;top:406.5px" width="5" height="4" viewBox="0 0 5 4"><path d="M0.3 0.4 L2.5 3.4 L4.7 0.4Z" fill="#555"/></svg>
<div class="a" style="left:555.2px;top:203.3px;width:154.9px;height:140.2px;border:1.7px solid #DA5A66"></div>
<svg style="left:0;top:0" width="825" height="438" viewBox="0 0 825 438">
<defs><radialGradient id="shad" cx="0.5" cy="0.5" r="0.5">
<stop offset="0" stop-color="#767676"/><stop offset="0.3" stop-color="#9A9A9A"/><stop offset="0.65" stop-color="#CDCDCD"/><stop offset="0.92" stop-color="#E9E9E9"/><stop offset="1" stop-color="#F2F2F2"/></radialGradient></defs>

<ellipse cx="390.2" cy="351" rx="64.4" ry="19" fill="url(#shad)"/>
<g id="fig">
<!-- hair -->
<path d="M348 158.8 C344.6 157.8 343.6 154.6 344.2 150.4 C344.8 146 347 142 349.6 139.8 C350.6 133.4 354.6 127.6 360.4 125.4 C366.4 123.2 374 123.8 378.8 127.4 C383 130.6 384.6 136.6 384.8 143.6 C385 148.6 385.8 153.4 385.2 156.4 C384.6 159.4 381.4 160.2 377.6 160 L362 160 Z" fill="#0A0A0A"/>
<!-- neck -->
<path d="M363.4 154 L363.6 161.6 Q370 163.4 375.6 161.4 L375.4 154 Z" fill="#fff" stroke="#0A0A0A" stroke-width="1.1"/>
<!-- face -->
<path d="M360.5 141.6 C362.6 139.8 364.6 138.6 366.7 138 C369 137.2 371 136.4 373.6 134.6 C375 135.8 376 136.4 377.2 136.6 C378.6 136.8 380 137 380.6 137.5 C381.4 141 381.6 145.4 381 148.7 C380.2 152.6 378.4 155 376 156.4 C374.4 157.2 372.4 157.6 370.8 157.4 C367.6 157.2 365 156.4 363.6 155 C361.8 153.4 360.4 151.6 359.6 150 C357.6 150.4 356 148.4 356.2 146.2 C356.4 144.2 358 143.2 359.6 143.6 Z" fill="#fff" stroke="#0A0A0A" stroke-width="1.2" stroke-linejoin="round"/>
<path d="M366.8 146.2 Q368.8 144 370.8 146 M373.8 145.4 Q375.4 143.6 377 145.2" fill="none" stroke="#111" stroke-width="0.95"/>
<path d="M366.2 142.4 Q368 140.8 369.8 141.4 M375 141 Q376.6 141 377.6 142.2" fill="none" stroke="#111" stroke-width="0.8"/>
<path d="M372.2 147.4 Q374.8 148.4 372.8 149.8" fill="none" stroke="#111" stroke-width="0.9"/>
<path d="M370.4 152.2 Q373 154.2 375.6 152.6" fill="none" stroke="#111" stroke-width="1"/>
<!-- shirt fill -->
<path d="M364 161.4 C352 162.6 343 166.6 338.4 173.6 C333.8 181 329.6 190 327.9 199.5 L338.7 198.4 L348.4 188.7 L352.4 207 L387.2 207 L388.3 196.9 L397.6 196.4 C396.4 186 393.4 176 389 170 C386 165.8 381 162.6 375.6 161.4 Z" fill="#fff"/>
<!-- skirt -->
<path d="M350.8 206 L388.6 206 C390 222 393.6 252 396.8 280 C397.8 290 399.6 300 400.4 307.6 C392 311.4 384 313.4 376 313.8 C366 314 352 311 338 305.8 C338.6 290 341 268 343.4 250 C345.4 234 348 218 350.8 206 Z" fill="#050505"/>
<!-- arms fill -->
<path d="M327.9 199.5 C333 207 341 214 349 219 C351.6 221.6 354 223.4 357 223.2 C360.6 222.6 364 220 367.4 217 C364 216 361 215.8 358.1 215.5 L338.7 198.4 Z" fill="#fff"/>
<path d="M388.3 196.9 L397.6 196.4 C399.6 200.6 400 204.4 398.2 208 C396.4 211 393 214 388.5 219.9 L387.8 209.5 C389.6 207 390.2 203 389.3 199.1 Z" fill="#fff"/>
<g fill="none" stroke="#0A0A0A" stroke-width="1.4" stroke-linecap="round" stroke-linejoin="round">
<path d="M364 161.4 C352 162.6 343 166.6 338.4 173.6 C333.8 181 329.6 190 327.9 199.5 C333 207 341 214 349 219 C351.6 221.6 354 223.4 357 223.2 C360.6 222.6 364 220 367.4 217 C364 216 361 215.8 358.1 215.5"/>
<path d="M331.4 189.8 L339.3 195.2"/>
<path d="M352.4 180.7 Q344.6 188 338.7 198.4 L358.1 215.5"/>
<path d="M348.4 188.7 C350.4 195 351.6 201 352.4 207"/>
<path d="M375.6 161.4 C381 162.6 386 165.8 389 170 C393.4 176 397 186 398.2 194.7 C399.6 200.6 400 204.4 398.2 208 C396.4 211 393 214 388.5 219.9"/>
<path d="M387.8 196.9 Q393 197.6 397.4 196.2"/>
<path d="M387.8 179.8 C388.6 186 388.6 193 387.8 199.1 C387.4 202 387.2 204 387 206.5"/>
<path d="M389.3 199.1 C390.2 203 389.6 207 387.8 209.5"/>
</g>
<!-- legs -->
<path d="M348.8 310.4 C350.6 320 352.4 330 354.6 337 L364.4 334.6 C362.6 327.8 361.6 319 361.4 312.8 Z" fill="#fff"/>
<path d="M385.4 311.6 C388 319 390.6 327 392.9 333 L414.2 336.6 C408.6 334 403.6 330 401.4 326.4 C399.4 321.6 398 316 397.8 311.4 Z" fill="#fff"/>
<path d="M354.6 336.8 L364.4 334.6 C366.4 339 369.6 342.6 374.4 345.2 C369 345.4 364 344.6 360.6 343 C357.8 341.6 355.8 339.6 354.6 336.8 Z" fill="#fff"/>
<path d="M392.9 332.8 L414.2 336.6 L411.7 339 L400.4 339 C397.4 338.4 394.6 336.4 392.9 332.8 Z" fill="#fff"/>
<g fill="none" stroke="#0A0A0A" stroke-width="1.3" stroke-linecap="round">
<path d="M348.8 310.4 C350.6 320 352.4 330 354.6 337.4"/>
<path d="M361.4 312.8 C361.6 319 362.6 327.8 364.4 334.6 C366.4 339 369.6 342.6 374.4 345.2"/>
<path d="M385.4 311.6 C388 319 390.6 327 392.9 333.4"/>
<path d="M397.8 311.4 C398 316 399.4 321.6 401.4 326.4 C403.6 330 408.6 334 414.2 336.6"/>
</g>
<!-- shoes -->
<path d="M352.6 336.4 C351.8 340.4 353.6 345 357.6 348.4 C361 351 366 352.2 371.4 352.2 C375.6 352.2 379.6 351 379.8 348.4 C380 346.4 377.6 345.2 374.4 345 C369 345.2 364 344.4 360.6 342.8 C357.8 341.4 355.8 339.4 354.6 336.6 Z" fill="#050505"/>
<path d="M392.6 333.2 C392 336.6 392.6 340.6 395 342.8 C397.4 344.8 402 345.2 410 345.2 C417 345.2 424 345 426.6 343.4 C428.6 341.8 427.6 339.2 424.4 338.2 C420.6 337.2 417.4 336.8 414.6 336.4 C413.2 338 412.4 338.8 411.4 339.2 L400.4 339.2 C397.2 338.6 394.4 336.6 392.6 333.2 Z" fill="#050505"/>
</g>

<g fill="none" stroke="#9A9A9A" stroke-width="0.8">
<rect x="324.5" y="330.8" width="132.5" height="40.2"/>
</g>
<g fill="#FFFFFF" stroke="#7A7A7A" stroke-width="0.9">
<circle cx="324.5" cy="330.8" r="2.8"/><circle cx="390.8" cy="330.8" r="2.8"/><circle cx="457" cy="330.8" r="2.8"/>
<circle cx="324.5" cy="351" r="2.8"/><circle cx="457" cy="351" r="2.8"/>
<circle cx="324.5" cy="371" r="2.8"/><circle cx="390.8" cy="371" r="2.8"/><circle cx="457" cy="371" r="2.8"/>
</g>
<g>
<circle cx="390.4" cy="312.4" r="4.4" fill="#FFFFFF" stroke="#6a6a6a" stroke-width="1"/>
<path d="M387.8 310.8 A2.7 2.7 0 1 0 393 311.2" fill="none" stroke="#444" stroke-width="1.1"/>
<path d="M392.2 308.6 L394 311.6 L390.8 311.8 Z" fill="#444"/>
</g>
</svg>
<div class="a" style="left:17.3px;top:103.9px;width:96.7px;height:55.9px;background:#FFFFFF;border:2px solid #B5564A;border-radius:3.5px"></div>
<div class="t" style="left:7.00px;top:105.32px;font-size:6.8px;line-height:6.8px;color:#C0573F;font-weight:400;letter-spacing:0.000px;">1</div>
<svg style="left:0;top:0" width="130" height="170" viewBox="0 0 130 170"><g transform="translate(18.9,106.4) scale(0.1485) translate(-150,-61)"><ellipse cx="390.2" cy="351" rx="64.4" ry="19" fill="#D5D9D0" opacity="0.9"/><use href="#fig"/></g></svg>
<div class="a" style="left:816px;top:95px;width:9px;height:157px;background:#F3F3F1"></div>
<svg style="left:818px;top:97.5px" width="5" height="4" viewBox="0 0 5 4"><path d="M0.3 3.6 L2.5 0.6 L4.7 3.6Z" fill="#444"/></svg>
<div class="a" style="left:818.2px;top:254.7px;width:4.8px;height:132.5px;background:#454545;border-radius:2.4px"></div>
<svg style="left:818px;top:390px" width="6" height="24" viewBox="0 0 6 24"><path d="M0.4 0.6 L3 3.6 L5.6 0.6Z" fill="#555"/><path d="M0.4 11.4 L3 8.6 L5.6 11.4 M0.4 13.6 L3 10.8 L5.6 13.6" fill="none" stroke="#555" stroke-width="1.3"/><path d="M0.4 17.6 L3 20.4 L5.6 17.6 M0.4 19.8 L3 22.6 L5.6 19.8" fill="none" stroke="#555" stroke-width="1.3"/></svg>
<div class="t" style="left:4.00px;top:429.86px;font-size:6.3px;line-height:6.3px;color:#505050;font-weight:400;letter-spacing:0.000px;transform:scaleX(0.8884);transform-origin:0 0;">Slide 1 of 1</div>
<svg style="left:43px;top:428.5px" width="8" height="8" viewBox="0 0 8 8"><path d="M0.5 0.5 H7.5 V5.5 L5.5 7.5 H0.5 Z M5.5 7.5 V5.5 H7.5" fill="none" stroke="#555" stroke-width="0.8"/><path d="M3.8 1.8 V4.2 M3.8 5.2 V5.8" stroke="#555" stroke-width="0.8"/></svg>
<div class="t" style="left:60.00px;top:429.86px;font-size:6.3px;line-height:6.3px;color:#505050;font-weight:400;letter-spacing:0.000px;transform:scaleX(0.8493);transform-origin:0 0;">English (United States)</div>
<svg style="left:123.5px;top:428.4px" width="9" height="9" viewBox="0 0 9 9"><circle cx="4.5" cy="1.6" r="1.1" fill="#555"/><path d="M0.8 3.2 H8.2 M4.5 3.2 V5.4 L2.4 8.4 M4.5 5.4 L6.6 8.4" fill="none" stroke="#555" stroke-width="1"/></svg>
<div class="t" style="left:134.00px;top:429.86px;font-size:6.3px;line-height:6.3px;color:#505050;font-weight:400;letter-spacing:0.000px;transform:scaleX(0.8689);transform-origin:0 0;">Accessibility: Investigate</div>
<svg style="left:598.5px;top:427.8px" width="9" height="10" viewBox="0 0 9 10"><path d="M2.6 3 L4.5 1.2 L6.4 3" fill="none" stroke="#555" stroke-width="0.8"/><path d="M0.4 5.4 H8.6 M0.4 7.2 H8.6 M0.4 9 H8.6" stroke="#555" stroke-width="0.8"/></svg>
<div class="t" style="left:608.00px;top:429.86px;font-size:6.3px;line-height:6.3px;color:#505050;font-weight:400;letter-spacing:0.000px;transform:scaleX(0.9299);transform-origin:0 0;">Notes</div>
<div class="a" style="left:634px;top:426.5px;width:20.7px;height:11.5px;background:#DDDDD7"></div>
<svg style="left:640px;top:428.8px" width="9" height="8" viewBox="0 0 9 8"><rect x="0.3" y="0.3" width="8.4" height="7.4" fill="#7A7A7A"/><path d="M1.6 1.8 H4 M1.6 3.4 H4 M5.2 1.8 V6.2" stroke="#BDBDBD" stroke-width="0.8"/></svg>
<svg style="left:661.3px;top:428.6px" width="9" height="8" viewBox="0 0 9 8"><rect x="0.5" y="0.5" width="3.4" height="2.8" fill="none" stroke="#555" stroke-width="0.8"/><rect x="5.1" y="0.5" width="3.4" height="2.8" fill="none" stroke="#555" stroke-width="0.8"/><rect x="0.5" y="4.7" width="3.4" height="2.8" fill="none" stroke="#555" stroke-width="0.8"/><rect x="5.1" y="4.7" width="3.4" height="2.8" fill="none" stroke="#555" stroke-width="0.8"/></svg>
<svg style="left:683.3px;top:428.6px" width="9" height="8" viewBox="0 0 9 8"><rect x="0.5" y="0.5" width="8" height="7" fill="none" stroke="#555" stroke-width="0.8"/><path d="M4.5 0.5 V7.5 M0.5 3 H8.5" stroke="#555" stroke-width="0.8"/></svg>
<svg style="left:705px;top:428.4px" width="9" height="9" viewBox="0 0 9 9"><rect x="0.5" y="0.8" width="8" height="4.6" fill="none" stroke="#555" stroke-width="0.8"/><path d="M4.5 5.4 V8.6 M2.6 8.6 H6.4" stroke="#555" stroke-width="0.8"/></svg>
<div class="a" style="left:723.5px;top:432.4px;width:2.8px;height:0.8px;background:#777"></div>
<div class="a" style="left:729.5px;top:432.4px;width:54.5px;height:0.8px;background:#8A8A8A"></div>
<div class="a" style="left:754px;top:429.2px;width:3px;height:7px;background:#555;border-radius:1px"></div>
<svg style="left:786px;top:430.4px" width="5" height="5" viewBox="0 0 5 5"><path d="M0.2 2.5 H4.8 M2.5 0.2 V4.8" stroke="#777" stroke-width="0.8"/></svg>
<div class="t" style="left:797.00px;top:429.26px;font-size:6px;line-height:6px;color:#555555;font-weight:400;letter-spacing:0.000px;transform:scaleX(0.8822);transform-origin:0 0;">94%</div>
<svg style="left:814.5px;top:428.2px" width="9" height="9" viewBox="0 0 9 9"><path d="M4.5 0.5 L8.5 4.5 L4.5 8.5 L0.5 4.5 Z" fill="none" stroke="#555" stroke-width="0.9"/><circle cx="4.5" cy="4.5" r="1.2" fill="#555"/></svg>
</body></html>
